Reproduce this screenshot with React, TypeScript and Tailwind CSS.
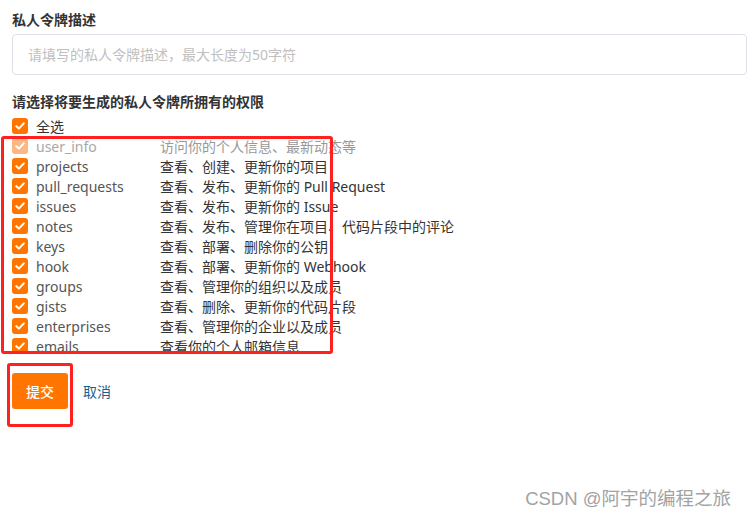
import React from "react";

const rows: [string, string][] = [
  ["user_info", "访问你的个人信息、最新动态等"],
  ["projects", "查看、创建、更新你的项目"],
  ["pull_requests", "查看、发布、更新你的 Pull Request"],
  ["issues", "查看、发布、更新你的 Issue"],
  ["notes", "查看、发布、管理你在项目、代码片段中的评论"],
  ["keys", "查看、部署、删除你的公钥"],
  ["hook", "查看、部署、更新你的 Webhook"],
  ["groups", "查看、管理你的组织以及成员"],
  ["gists", "查看、删除、更新你的代码片段"],
  ["enterprises", "查看、管理你的企业以及成员"],
  ["emails", "查看你的个人邮箱信息"],
];

function Check({ faded }: { faded?: boolean }) {
  return (
    <span
      className={
        "flex h-[16px] w-[16px] shrink-0 items-center justify-center rounded-[3px] " +
        (faded ? "bg-[#fdb784]" : "bg-[#ff7500]")
      }
    >
      <svg width="12" height="12" viewBox="0 0 12 12" fill="none">
        <path d="M2.3 6.2 L4.9 8.6 L9.8 3.4" stroke="white" strokeWidth="2.1" strokeLinecap="round" strokeLinejoin="round" />
      </svg>
    </span>
  );
}

export default function App() {
  return (
    <div
      className="relative h-[517px] w-[747px] overflow-hidden bg-white text-[14px]"
      style={{ fontFamily: '"Noto Sans", "Noto Sans CJK SC", sans-serif' }}
    >
      <div className="pl-[12px] pt-[10px]">
        <div className="h-[20px] leading-[20px] font-bold text-[#333]">私人令牌描述</div>
        <div className="mt-[4px] flex h-[41px] items-center rounded-[4px] border border-[#e0dfe8] pl-[15px] text-[#c0c0c0]">
          请填写的私人令牌描述，最大长度为50字符
        </div>
        <div className="mt-[17px] h-[20px] leading-[20px] font-bold text-[#333]">请选择将要生成的私人令牌所拥有的权限</div>
        <div className="mt-[4px] flex flex-col">
          <div className="flex h-[20px] items-center gap-[8px]">
            <Check />
            <span className="text-[#333]">全选</span>
          </div>
          {rows.map(([n, d], i) => (
            <div key={n} className="flex h-[20px] items-center">
              <Check faded={i === 0} />
              <span className={"ml-[8px] w-[124px] " + (i === 0 ? "text-[#a8a8a8]" : "text-[#555]")}>{n}</span>
              <span className={i === 0 ? "text-[#999]" : "text-[#333]"}>{d}</span>
            </div>
          ))}
        </div>
        <div className="mt-[17px] flex items-center">
          <button className="h-[36px] w-[56px] rounded-[3px] bg-[#ff7500] font-medium text-white">提交</button>
          <span className="ml-[15px] text-[#1b5f8c]">取消</span>
        </div>
      </div>

      <div className="pointer-events-none absolute left-[1px] top-[136px] h-[218px] w-[332px] rounded-[3px] border-[3px] border-[#ff2020]" />
      <div className="pointer-events-none absolute left-[7px] top-[363px] h-[64px] w-[66px] rounded-[3px] border-[3px] border-[#ff2020]" />

      <div
        className="absolute right-[16px] top-[485px] text-[18.5px] text-[#a3a3a3]"
        style={{ fontFamily: '"Liberation Sans", "Noto Sans CJK SC", sans-serif' }}
      >
        CSDN @阿宇的编程之旅
      </div>
    </div>
  );
}
